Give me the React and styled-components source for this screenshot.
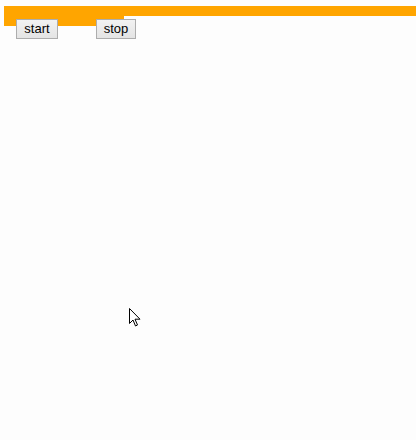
import React from "react";
import styled, { createGlobalStyle } from "styled-components";

const Global = createGlobalStyle`
  html, body { margin: 0; padding: 0; background: #fdfdfd; }
  body { font-family: "Liberation Sans", Arial, sans-serif; }
`;

const Page = styled.div`
  position: relative;
  width: 416px;
  height: 440px;
  padding: 6px 0 0 4px;
  box-sizing: border-box;
`;

const Bar = styled.div`
  height: 10px;
  background: #ffa500;
`;

const Block = styled.div`
  position: absolute;
  left: 4px;
  top: 6px;
  width: 120px;
  height: 20px;
  background: #ffa500;
`;

const Controls = styled.div`
  position: relative;
  display: flex;
  gap: 38px;
  padding: 3px 0 0 12px;
`;

const Button = styled.button`
  box-sizing: border-box;
  height: 20px;
  width: ${(p) => p.$w}px;
  padding: 0;
  font-family: "Liberation Sans", Arial, sans-serif;
  font-size: 13px;
  color: #000;
  border: 1px solid #adadad;
  border-radius: 0;
  background: linear-gradient(#f2f2f2, #e4e4e4);
  line-height: 18px;
`;

const Cursor = styled.svg`
  position: absolute;
  left: 129px;
  top: 308px;
`;

export default function App() {
  return (
    <>
      <Global />
      <Page>
        <Bar />
        <Block />
        <Controls>
          <Button $w={42}>start</Button>
          <Button $w={40}>stop</Button>
        </Controls>
        <Cursor width="13" height="20" viewBox="0 0 13 20">
          <path
            d="M0.5 0.5 L0.5 15.5 L4 12 L6.5 18 L8.5 17 L6 11.2 L11 11.2 Z"
            fill="#fff"
            stroke="#000"
            strokeWidth="1"
          />
        </Cursor>
      </Page>
    </>
  );
}
